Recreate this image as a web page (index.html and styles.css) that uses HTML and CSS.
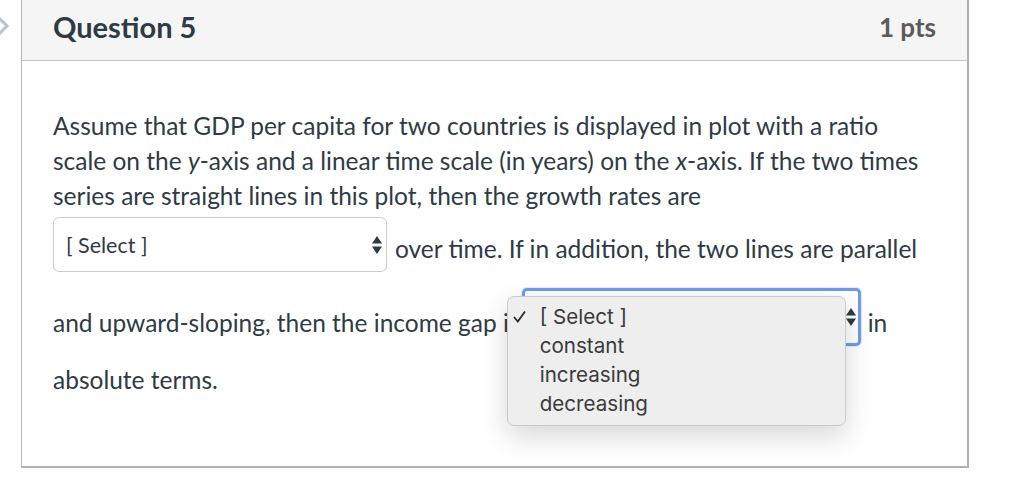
FILE: index.html
```html
<!DOCTYPE html>
<html>
<head>
<meta charset=utf-8>
<title>Question 5</title>
<link rel="stylesheet" href="styles.css">
</head>
<body>
<div class="page">
  <svg class="nav-arrow" width="12" height="24" viewBox="0 0 12 24"><path d="M-2 3 L7 12 L-2 21" fill="none" stroke="#b3c4d6" stroke-width="3"/></svg>

  <div class="question">
    <div class="question-header">
      <h2 class="question-title">Question 5</h2>
      <span class="question-points">1 pts</span>
    </div>
    <div class="question-body">
      <p class="question-text">Assume that GDP per capita for two countries is displayed in plot with a ratio scale on the <i>y</i>-axis and a linear time scale (in years) on the <i>x</i>-axis. If the two times series are straight lines in this plot, then the growth rates are
        <span class="select first"><span class="select-label">[ Select ]</span><svg class="select-arrows" width="10" height="20" viewBox="0 0 10 20"><path d="M0 8.5 L5 1 L10 8.5 Z M0 11.5 L10 11.5 L5 19 Z" fill="#2d3b45"/></svg></span>over time. If in addition, the two lines are parallel
        and upward-sloping, then the income gap is
        <span class="select focused"><span class="select-label">[ Select ]</span><svg class="select-arrows" width="10" height="20" viewBox="0 0 10 20"><path d="M0 8.5 L5 1 L10 8.5 Z M0 11.5 L10 11.5 L5 19 Z" fill="#2d3b45"/></svg>
          <span class="menu">
            <span class="menu-item checked"><svg class="check" width="13" height="13" viewBox="0 0 13 13"><path d="M1 7 L4.8 11.5 L12 1.5" fill="none" stroke="#2a2a2a" stroke-width="1.8"/></svg>[ Select ]</span>
            <span class="menu-item">constant</span>
            <span class="menu-item">increasing</span>
            <span class="menu-item">decreasing</span>
          </span>
        </span>in absolute terms.</p>
    </div>
  </div>
</div>
</body>
</html>
```

FILE: styles.css
```css
html, body
{
	margin:0;
	padding:0;
	background-color:#fff;
	font-family: Lato, "Open Sans", Arial, sans-serif;
	color:#2d3b45;
}
.page
{
	position:relative;
	padding-left:21px;
	width:948px;
}
.nav-arrow
{
	position:absolute;
	left:0;
	top:14px;
}
.question
{
	border-left:1px solid #b8b8b8;
	border-right:2px solid #b0b0b0;
	border-bottom:2px solid #b0b0b0;
	height:468px;
	box-sizing:border-box;
}
.question-header
{
	display:flex;
	align-items:center;
	justify-content:space-between;
	height:60px;
	padding:0 31px 0 31px;
	background-color:#f5f5f5;
	border-bottom:1px solid #c4c4c4;
}
.question-title
{
	margin:0 0 8px 0;
	font-size:29px;
	font-weight:bold;
	color:#2d3b45;
}
.question-points
{
	margin-bottom:6px;
	font-size:26px;
	font-weight:bold;
	color:#5b5b5b;
}
.question-body
{
	padding:47px 0 0 31px;
}
.question-text
{
	margin:0;
	font-size:24.5px;
	line-height:35px;
	width:872px;
}
.select
{
	position:relative;
	display:inline-flex;
	align-items:center;
	justify-content:space-between;
	box-sizing:border-box;
	vertical-align:5px;
	font-size:21.5px;
	line-height:26px;
	color:#2d3b45;
	background-color:#fff;
}
.select.first
{
	width:334px;
	height:55px;
	padding:0 4px 0 12px;
	margin:4px 8px 4px 0;
	border:1px solid #c7cdd1;
	border-radius:6px;
}
.select.focused
{
	width:339px;
	height:58px;
	padding:0 2px 0 13px;
	margin:12px 7px 16px -4px;
	vertical-align:7px;
	border:3px solid #6e9ce6;
	border-radius:5px;
	box-shadow:0 0 2px #9dbcf0;
}
.select-arrows
{
	display:block;
}
.menu
{
	position:absolute;
	left:-18px;
	top:5px;
	width:339px;
	padding:5px 0 7px 0;
	box-sizing:border-box;
	background-color:#eeeeee;
	border:1px solid #cacaca;
	border-radius:7px;
	box-shadow:0 10px 28px rgba(0,0,0,.16);
	font-family: Inter, "Liberation Sans", Arial, sans-serif;
	font-size:20.6px;
	line-height:29px;
	color:#3a3a3a;
}
.menu-item
{
	display:block;
	padding-left:32px;
	position:relative;
}
.check
{
	position:absolute;
	left:5px;
	top:8px;
}
```
